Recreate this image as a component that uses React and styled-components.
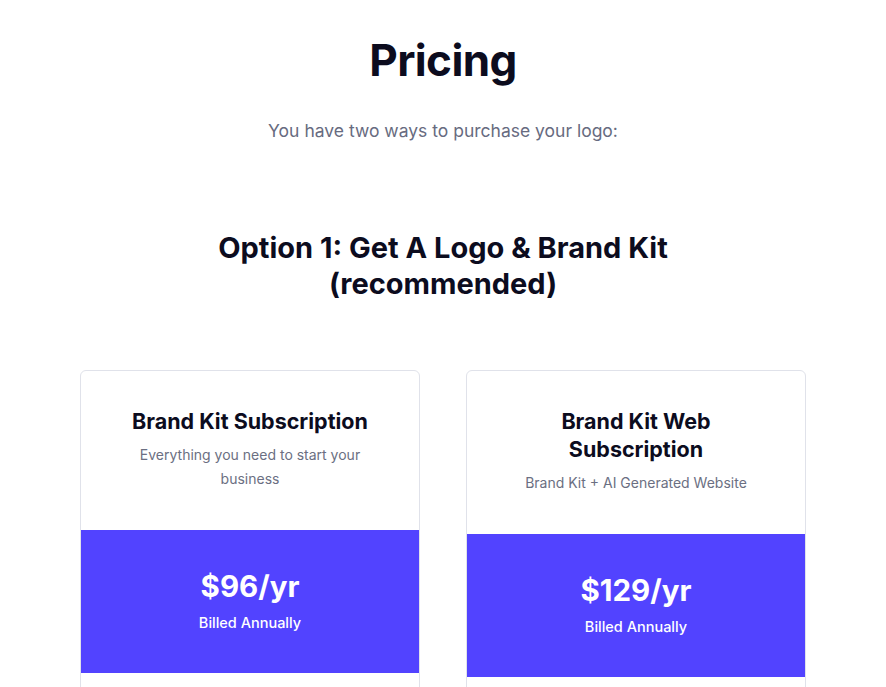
import React from "react";
import styled, { createGlobalStyle } from "styled-components";

const GlobalStyle = createGlobalStyle`
  body {
    margin: 0;
    background: #ffffff;
    font-family: Inter, "Noto Sans", Arial, sans-serif;
    color: #0c0c1e;
  }
`;

const plans = [
  {
    title: "Brand Kit Subscription",
    description: "Everything you need to start your business",
    price: "$96/yr",
    billing: "Billed Annually",
  },
  {
    title: "Brand Kit Web Subscription",
    description: "Brand Kit + AI Generated Website",
    price: "$129/yr",
    billing: "Billed Annually",
  },
];

const App = () => {
  return (
    <>
      <GlobalStyle />
      <Page>
        <Title>Pricing</Title>
        <Subtitle>You have two ways to purchase your logo:</Subtitle>
        <OptionHeading>Option 1: Get A Logo &amp; Brand Kit (recommended)</OptionHeading>
        <Cards>
          {plans.map((plan) => (
            <Card key={plan.title}>
              <CardHead>
                <CardTitle>{plan.title}</CardTitle>
                <CardText>{plan.description}</CardText>
              </CardHead>
              <PriceBand>
                <Price>{plan.price}</Price>
                <Billing>{plan.billing}</Billing>
              </PriceBand>
              <CardBody />
            </Card>
          ))}
        </Cards>
      </Page>
    </>
  );
};

export default App;

const Page = styled.main`
  display: flex;
  flex-direction: column;
  align-items: center;
  padding-top: 32px;
  text-align: center;
`;

const Title = styled.h1`
  margin: 0;
  font-size: 44px;
  line-height: 56px;
  font-weight: 700;
  letter-spacing: -0.6px;
  color: #0c0c1e;
`;

const Subtitle = styled.p`
  margin: 31px 0 0;
  font-size: 17.5px;
  line-height: 24px;
  color: #676b80;
`;

const OptionHeading = styled.h2`
  margin: 87px 0 0;
  max-width: 500px;
  font-size: 29px;
  line-height: 36px;
  font-weight: 700;
  color: #0c0c1e;
`;

const Cards = styled.div`
  display: grid;
  grid-template-columns: 340px 340px;
  gap: 46px;
  margin-top: 68px;
`;

const Card = styled.div`
  display: flex;
  flex-direction: column;
  border: 1px solid #e0e2ea;
  border-radius: 6px;
  overflow: hidden;
  background: #ffffff;
`;

const CardHead = styled.div`
  padding: 36px 46px 39px;
`;

const CardTitle = styled.h3`
  margin: 0;
  font-size: 21.5px;
  line-height: 28px;
  font-weight: 700;
  color: #0c0c1e;
`;

const CardText = styled.p`
  margin: 8px 0 0;
  font-size: 14px;
  line-height: 24px;
  color: #6b6f82;
`;

const PriceBand = styled.div`
  padding: 36px 24px 41px;
  background: #5243ff;
  color: #ffffff;
`;

const Price = styled.div`
  font-size: 29.5px;
  line-height: 40px;
  font-weight: 700;
`;

const Billing = styled.div`
  margin-top: 8px;
  font-size: 14.5px;
  line-height: 18px;
  font-weight: 500;
`;

const CardBody = styled.div`
  height: 120px;
`;
